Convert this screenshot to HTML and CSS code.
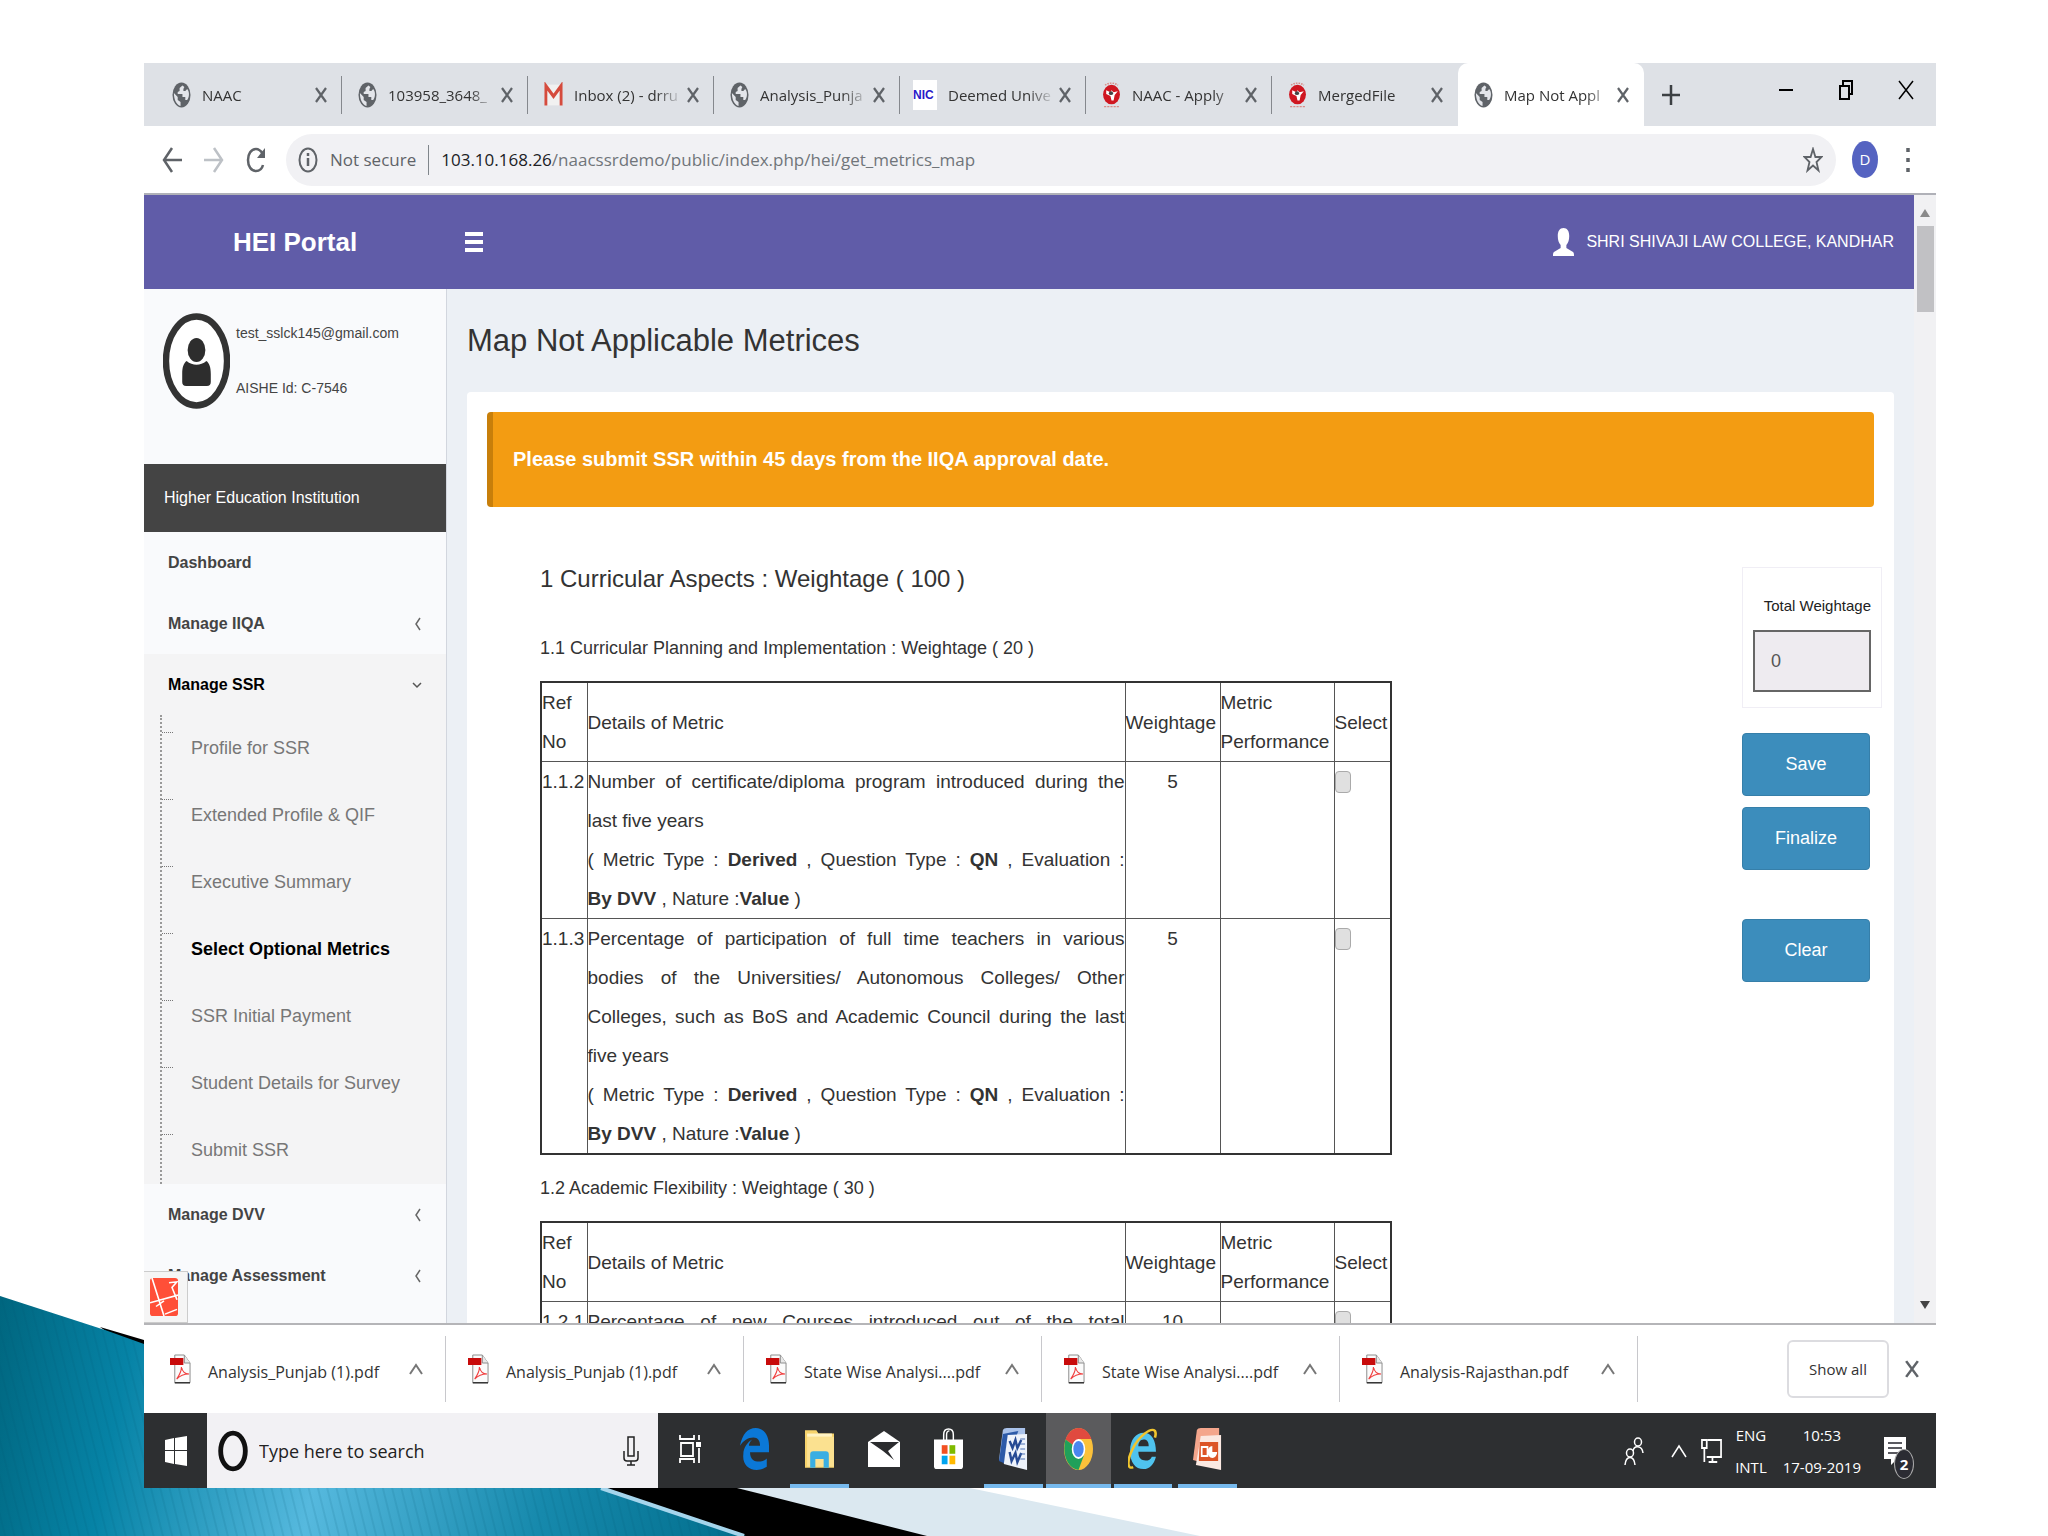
FILE: index.html
```html
<!DOCTYPE html>
<html lang="en">
<head>
  <meta charset="UTF-8" />
  <title>Map Not Applicable Metrices</title>
  <link rel="stylesheet" href="styles.css">
</head>

<body>
  <!-- Shared icons -->
  <svg class="defs" aria-hidden="true">
    <symbol id="globe" viewBox="0 0 20 26" preserveAspectRatio="none">
      <ellipse cx="10" cy="13" rx="9.500" ry="12.500" fill="#5f6368"/>
      <path d="M2 11l4 4v3l3 2v4C5 23 2 18 2 11z" fill="#e3e5ea"/>
      <path d="M11 3.500 8 6v3L6 10v2h5v3h3v3h2c3-4 2-9 0-11l-2 2h-2V7l1-2z" fill="#e3e5ea"/>
    </symbol>
    <symbol id="cross" viewBox="0 0 12 16" preserveAspectRatio="none">
      <path d="M1 1l10 14M11 1 1 15" stroke="#5f6368" stroke-width="2.200" fill="none"/>
    </symbol>
    <symbol id="naac" viewBox="0 0 18 28" preserveAspectRatio="none">
      <path d="M3 3.500C6 .5 12 .5 15 3.500" stroke="#d98a86" stroke-width="1.500" stroke-dasharray="1.500 1" fill="none"/>
      <ellipse cx="9" cy="13.500" rx="8" ry="10.500" fill="#cf1620"/>
      <path d="M4 9l4 2 1-2 2 2 4-1-3 4-1 6h-2l-1-5-4-2z" fill="#fff"/>
      <circle cx="8.500" cy="12" r="2" fill="#444"/>
      <path d="M2 26.500h14" stroke="#d98a86" stroke-width="1.500" stroke-dasharray="2 1"/>
    </symbol>
    <symbol id="pdf" viewBox="0 0 22 30" preserveAspectRatio="none">
      <path d="M5 1h10l6 8v19.500H5z" fill="#fbfbfb" stroke="#8b8b8b"/>
      <path d="M15 1v8h6" fill="#e8e8e8" stroke="#8b8b8b"/>
      <path d="M5 28.800h16" stroke="#333" stroke-width="1.500"/>
      <path d="M0 4h14v7H0z" fill="#c80b0b"/>
      <path d="M7 25c3-4 5-8 5-12 1 5 4 7 8 7-5 0-9 1-13 5z" fill="none" stroke="#f04040" stroke-width="1.200"/>
    </symbol>
    <symbol id="up" viewBox="0 0 14 12" preserveAspectRatio="none">
      <path d="M1 11 7 2l6 9" fill="none" stroke="#777" stroke-width="2"/>
    </symbol>
    <symbol id="left" viewBox="0 0 8 14" preserveAspectRatio="none">
      <path d="M6 1 2 7l4 6" fill="none" stroke="#666" stroke-width="1.500"/>
    </symbol>
  </svg>

  <!-- Slide decoration -->
  <svg class="slide-art" viewBox="0 0 1240 240" aria-hidden="true">
    <defs>
      <linearGradient id="teal" x1="0" y1="0" x2="750" y2="150" gradientUnits="userSpaceOnUse">
        <stop offset="0" stop-color="#00667f"/>
        <stop offset=".18" stop-color="#0683a6"/>
        <stop offset=".45" stop-color="#56b9de"/>
        <stop offset=".75" stop-color="#1689ac"/>
        <stop offset="1" stop-color="#03708f"/>
      </linearGradient>
      <pattern id="lines" width="9" height="30" patternUnits="userSpaceOnUse" patternTransform="rotate(-14)">
        <path d="M1 0v30" stroke="#00536d" stroke-opacity=".22"/>
      </pattern>
    </defs>
    <path d="M730 190h230l240 50H910z" fill="#dbe8f0"/>
    <path d="M100 31l44 13 443 148h150l190 48H740L140 60z" fill="#000"/>
    <path d="M0 0l105 34 39 14 459 144 143 48H0z" fill="url(#teal)"/>
    <path d="M0 0l105 34 39 14 459 144 143 48H0z" fill="url(#lines)"/>
    <path d="M601 192l143 48" stroke="#a5d5ec" stroke-width="4"/>
  </svg>

  <div class="window">
    <!-- Tab strip -->
    <div class="tabs">
      <div class="tab"><svg class="fav"><use href="#globe"/></svg><span>NAAC</span><button aria-label="Close tab"><svg><use href="#cross"/></svg></button></div>
      <div class="tab"><svg class="fav"><use href="#globe"/></svg><span>103958_3648_</span><button aria-label="Close tab"><svg><use href="#cross"/></svg></button></div>
      <div class="tab"><svg class="fav" viewBox="0 0 20 20" preserveAspectRatio="none"><path d="M1 2h18v16H1z" fill="#f1f1f1"/><path d="M2 18V3l8 8 8-8v15" fill="none" stroke="#d54b3d" stroke-width="3"/></svg><span>Inbox (2) - drru</span><button aria-label="Close tab"><svg><use href="#cross"/></svg></button></div>
      <div class="tab"><svg class="fav"><use href="#globe"/></svg><span>Analysis_Punja</span><button aria-label="Close tab"><svg><use href="#cross"/></svg></button></div>
      <div class="tab"><b class="nic">NIC</b><span>Deemed Unive</span><button aria-label="Close tab"><svg><use href="#cross"/></svg></button></div>
      <div class="tab"><svg class="fav"><use href="#naac"/></svg><span>NAAC - Apply</span><button aria-label="Close tab"><svg><use href="#cross"/></svg></button></div>
      <div class="tab last"><svg class="fav"><use href="#naac"/></svg><span>MergedFile</span><button aria-label="Close tab"><svg><use href="#cross"/></svg></button></div>
      <div class="tab active"><svg class="fav"><use href="#globe"/></svg><span>Map Not Appl</span><button aria-label="Close tab"><svg><use href="#cross"/></svg></button></div>
      <button class="new-tab" aria-label="New tab"><svg viewBox="0 0 18 22"><path d="M9 1v20M0 11h18" stroke="#3c4043" stroke-width="2.500"/></svg></button>
      <div class="win-buttons">
        <button aria-label="Minimize"><svg viewBox="0 0 16 20"><path d="M1 10h14" stroke="#000" stroke-width="2"/></svg></button>
        <button aria-label="Restore"><svg viewBox="0 0 16 20"><path d="M2 6h9v13H2zM5 6V1h9v13h-3" fill="none" stroke="#000" stroke-width="2"/></svg></button>
        <button aria-label="Close"><svg viewBox="0 0 16 20"><path d="M1 1l14 18M15 1 1 19" stroke="#000" stroke-width="1.500"/></svg></button>
      </div>
    </div>

    <!-- Address bar -->
    <div class="toolbar">
      <button aria-label="Back"><svg viewBox="0 0 20 26"><path d="M10 1 2 13l8 12M2 13h18" fill="none" stroke="#5f6368" stroke-width="2.500"/></svg></button>
      <button aria-label="Forward"><svg viewBox="0 0 20 26"><path d="M10 1l8 12-8 12M18 13H0" fill="none" stroke="#bdc1c6" stroke-width="2.500"/></svg></button>
      <button aria-label="Reload"><svg viewBox="0 0 20 26"><path d="M17 18c-1 4-4 6-7 6-5 0-8-5-8-11S5 2 10 2c3 0 5 2 7 5" fill="none" stroke="#5f6368" stroke-width="2.500"/><path d="M19 1v10h-8z" fill="#5f6368"/></svg></button>
      <div class="address">
        <svg class="info" viewBox="0 0 20 26" preserveAspectRatio="none"><ellipse cx="10" cy="13" rx="8.500" ry="11.500" fill="none" stroke="#5f6368" stroke-width="2"/><path d="M10 11v8M10 6v3" stroke="#5f6368" stroke-width="2.500"/></svg>
        <span class="secure">Not secure</span>
        <span class="url"><b>103.10.168.26</b>/naacssrdemo/public/index.php/hei/get_metrics_map</span>
        <svg class="star" viewBox="0 0 20 26" preserveAspectRatio="none"><path d="M10 2l2.400 8H18.500l-5 5 2 8.500L10 18.500 4.500 23.500l2-8.500-5-5h6.100z" fill="none" stroke="#5f6368" stroke-width="1.800"/></svg>
      </div>
      <span class="avatar">D</span>
      <button aria-label="Menu"><svg viewBox="0 0 20 26"><path d="M10 1v4M10 11v4M10 21v4" stroke="#5f6368" stroke-width="3.500"/></svg></button>
    </div>

    <!-- Portal page -->
    <div class="viewport">
      <div class="portal">
        <header class="top">
          <a class="brand" href="#">HEI Portal</a>
          <button class="burger" aria-label="Toggle navigation"><i></i><i></i><i></i></button>
          <a class="college" href="#"><svg viewBox="0 0 22 28" preserveAspectRatio="none"><path d="M11 0c4 0 6 3 6 8 0 4-1 7-3 9v3l7 4c1 1 1 2 1 4H0c0-2 0-3 1-4l7-4v-3C6 15 5 12 5 8c0-5 2-8 6-8z" fill="#fff"/></svg>SHRI SHIVAJI LAW COLLEGE, KANDHAR</a>
        </header>

        <div class="columns">
          <aside class="sidebar">
            <div class="user">
              <svg viewBox="0 0 68 96" preserveAspectRatio="none">
                <ellipse cx="34" cy="48" rx="31" ry="44.500" fill="#fff" stroke="#333" stroke-width="6.500"/>
                <ellipse cx="34" cy="37" rx="9" ry="12" fill="#2d2d2d"/>
                <path d="M24 48c6 5 14 5 20 0 3 2 4.500 6 4.500 13v8q0 4-4 4h-21q-4 0-4-4v-8c0-7 1.500-11 4.500-13z" fill="#2d2d2d"/>
              </svg>
              <div>
                <p>test_sslck145@gmail.com</p>
                <p>AISHE Id: C-7546</p>
              </div>
            </div>
            <h2 class="side-head">Higher Education Institution</h2>
            <nav>
              <a class="item" href="#">Dashboard</a>
              <a class="item" href="#">Manage IIQA<svg><use href="#left"/></svg></a>
              <div class="open">
                <a class="item" href="#">Manage SSR<svg class="down" viewBox="0 0 10 10"><path d="M1 3l4 4 4-4" fill="none" stroke="#555" stroke-width="1.500"/></svg></a>
                <ul>
                  <li><a href="#">Profile for SSR</a></li>
                  <li><a href="#">Extended Profile &amp; QIF</a></li>
                  <li><a href="#">Executive Summary</a></li>
                  <li><a class="current" href="#">Select Optional Metrics</a></li>
                  <li><a href="#">SSR Initial Payment</a></li>
                  <li><a href="#">Student Details for Survey</a></li>
                  <li><a href="#">Submit SSR</a></li>
                </ul>
              </div>
              <a class="item" href="#">Manage DVV<svg><use href="#left"/></svg></a>
              <a class="item" href="#">Manage Assessment<svg><use href="#left"/></svg></a>
            </nav>
          </aside>

          <main>
            <h1>Map Not Applicable Metrices</h1>
            <div class="card">
              <div class="alert">Please submit SSR within 45 days from the IIQA approval date.</div>
              <div class="work">
                <section class="metrics">
                  <h3>1 Curricular Aspects : Weightage ( 100 )</h3>
                  <h4>1.1 Curricular Planning and Implementation : Weightage ( 20 )</h4>
                  <table>
                    <tr><th class="ref">Ref No</th><th>Details of Metric</th><th class="weight">Weightage</th><th class="perf">Metric Performance</th><th class="pick">Select</th></tr>
                    <tr>
                      <td>1.1.2</td>
                      <td class="detail">Number of certificate/diploma program introduced during the last five years<br>( Metric Type : <b>Derived</b> , Question Type : <b>QN</b> , Evaluation : <b>By DVV</b> , Nature :<b>Value</b> )</td>
                      <td class="num">5</td><td></td>
                      <td><input type="checkbox" aria-label="Select 1.1.2"></td>
                    </tr>
                    <tr>
                      <td>1.1.3</td>
                      <td class="detail">Percentage of participation of full time teachers in various bodies of the Universities/ Autonomous Colleges/ Other Colleges, such as BoS and Academic Council during the last five years<br>( Metric Type : <b>Derived</b> , Question Type : <b>QN</b> , Evaluation : <b>By DVV</b> , Nature :<b>Value</b> )</td>
                      <td class="num">5</td><td></td>
                      <td><input type="checkbox" aria-label="Select 1.1.3"></td>
                    </tr>
                  </table>
                  <h4>1.2 Academic Flexibility : Weightage ( 30 )</h4>
                  <table>
                    <tr><th class="ref">Ref No</th><th>Details of Metric</th><th class="weight">Weightage</th><th class="perf">Metric Performance</th><th class="pick">Select</th></tr>
                    <tr>
                      <td>1.2.1</td>
                      <td class="detail">Percentage of new Courses introduced out of the total <span class="keep">number of courses</span></td>
                      <td class="num">10</td><td></td>
                      <td><input type="checkbox" aria-label="Select 1.2.1"></td>
                    </tr>
                  </table>
                </section>
                <form class="actions">
                  <div class="total">
                    <label for="total">Total Weightage</label>
                    <input type="text" id="total" value="0" readonly>
                  </div>
                  <button type="button">Save</button>
                  <button type="button">Finalize</button>
                  <button type="button" class="clear">Clear</button>
                </form>
              </div>
            </div>
          </main>
        </div>
      </div>
      <div class="scrollbar">
        <svg viewBox="0 0 10 8"><path d="M0 8 5 0l5 8z" fill="#8a8a8a"/></svg>
        <div class="thumb"></div>
        <svg viewBox="0 0 10 8"><path d="M0 0h10L5 8z" fill="#444"/></svg>
      </div>
      <button class="debug" aria-label="Debug bar"><svg viewBox="0 0 28 40" preserveAspectRatio="none"><rect width="28" height="40" rx="3" fill="#ff4f38"/><path d="M2 0l12 40M0 26l28-8M19 5l8-1-5 6 5 13M6 30l8-6M15 38l12-5" fill="none" stroke="#fff" stroke-width="1.600"/></svg></button>
    </div>

    <!-- Downloads -->
    <div class="downloads">
      <div class="file"><svg class="pdf"><use href="#pdf"/></svg><a href="#">Analysis_Punjab (1).pdf</a><button aria-label="Options"><svg><use href="#up"/></svg></button></div>
      <div class="file"><svg class="pdf"><use href="#pdf"/></svg><a href="#">Analysis_Punjab (1).pdf</a><button aria-label="Options"><svg><use href="#up"/></svg></button></div>
      <div class="file"><svg class="pdf"><use href="#pdf"/></svg><a href="#">State Wise Analysi....pdf</a><button aria-label="Options"><svg><use href="#up"/></svg></button></div>
      <div class="file"><svg class="pdf"><use href="#pdf"/></svg><a href="#">State Wise Analysi....pdf</a><button aria-label="Options"><svg><use href="#up"/></svg></button></div>
      <div class="file"><svg class="pdf"><use href="#pdf"/></svg><a href="#">Analysis-Rajasthan.pdf</a><button aria-label="Options"><svg><use href="#up"/></svg></button></div>
      <button class="show-all">Show all</button>
      <button class="close-bar" aria-label="Close downloads"><svg><use href="#cross"/></svg></button>
    </div>

    <!-- Windows taskbar -->
    <div class="taskbar">
      <button class="start" aria-label="Start"><svg viewBox="0 0 22 30" preserveAspectRatio="none"><path d="M0 4l9-2v12H0zM10 2l12-2v14H10zM0 15h9v13l-9-2zM10 15h12v15l-12-2z" fill="#fff"/></svg></button>
      <label class="search">
        <svg class="ring" viewBox="0 0 28 40" preserveAspectRatio="none"><ellipse cx="14" cy="20" rx="11.500" ry="17" fill="none" stroke="#111" stroke-width="4.500"/></svg>
        <input type="text" placeholder="Type here to search">
        <svg class="mic" viewBox="0 0 16 30" preserveAspectRatio="none"><path d="M5 1h6v19H5zM1 15v7q0 3 3 3h8q3 0 3-3v-7M8 25v4M4 29h8" fill="none" stroke="#222" stroke-width="1.500"/></svg>
      </label>
      <div class="apps">
        <button class="app" aria-label="Task view"><svg class="small" viewBox="0 0 22 30" preserveAspectRatio="none"><path d="M1 1v4h14V1M2 9h12v13H2zM1 29v-4h14v4M20 1v5M20 14v15" fill="none" stroke="#fff" stroke-width="1.800"/><path d="M17 8h5v5h-5z" fill="#fff"/></svg></button>
        <button class="app" aria-label="Edge"><svg viewBox="0 0 26 40" preserveAspectRatio="none"><path d="M0 17C2 6 7 0 14 0c8 0 12 8 12 17v6H9c0 7 4 9 8 9 3 0 5-1 7-3v8c-3 2-6 3-9 3C7 40 2 34 3 25c0-6 4-12 8-14-2 2-3 4-3 6h10c0-5-2-8-6-8C7 9 3 12 0 17z" fill="#0b78d7"/></svg></button>
        <button class="app run" aria-label="File Explorer"><svg viewBox="0 0 28 38" preserveAspectRatio="none"><path d="M0 2h11l2 3h15v31H0z" fill="#f6d36c"/><path d="M2 5h24v3H2z" fill="#fff3c4"/><path d="M2 8h26v27H2z" fill="#fbe190"/><path d="M5 36V24q0-3 3-3h12q3 0 3 3v12h-5v-8h-8v8z" fill="#39aee2"/></svg></button>
        <button class="app" aria-label="Mail"><svg class="wide" viewBox="0 0 32 36" preserveAspectRatio="none"><path d="M0 11 16 0l16 11v25H0z" fill="#fff"/><path d="M2 11h29L20 20l6 9-11-9z" fill="#2b2c2e"/></svg></button>
        <button class="app" aria-label="Store"><svg viewBox="0 0 30 44" preserveAspectRatio="none"><path d="M10 13V7q0-6 5-6t5 6v6M13 13V7q0-4 3-4" fill="none" stroke="#fff" stroke-width="1.500"/><path d="M0 12h30v28q0 3-3 3H3q-3 0-3-3z" fill="#fff"/><path d="M8 18h6v9H8z" fill="#f25022"/><path d="M16 18h6v9h-6z" fill="#7fba00"/><path d="M8 29h6v9H8z" fill="#00a4ef"/><path d="M16 29h6v9h-6z" fill="#ffb900"/></svg></button>
        <button class="app run" aria-label="Word"><svg viewBox="0 0 30 42" preserveAspectRatio="none"><path d="M4 2q1-2 4-2h19v8L15 36 0 32z" fill="#a9c2ea"/><path d="M4 6 20 3 7 36 0 33z" fill="#2c5aa8"/><path d="M9 7l20-1v36L5 36z" fill="#eef3fb"/><path d="M11 13l3 7 3-8 2 8 4-8M11 24l2 9 4-8 2 9 4-9" fill="none" stroke="#274b94" stroke-width="2.500"/><path d="M22 11h5M22 16h5M22 21h5M22 26h5M22 31h5" stroke="#4a6fb5"/></svg></button>
        <button class="app on" aria-label="Chrome"><svg viewBox="0 0 28 42" preserveAspectRatio="none"><ellipse cx="14" cy="21" rx="14" ry="21" fill="#fbc13a"/><path d="M14 21 1.500 11.500C4 4 9 0 14 0c6 0 10 4 12.500 11H14z" fill="#e04a3f"/><path d="M1.500 11.500C-2 24 2 40 14 42l5-14-5-7z" fill="#20a05a"/><ellipse cx="14" cy="21" rx="6.500" ry="10" fill="#fff"/><ellipse cx="14" cy="21" rx="5" ry="8" fill="#4a86ee"/></svg></button>
        <button class="app run" aria-label="Internet Explorer"><svg viewBox="0 0 28 44" preserveAspectRatio="none"><path d="M2 24C2 12 8 5 15 5c8 0 12 8 12 20H10c0 7 3 9 7 9 3 0 5-1 6-4h4c-2 8-6 13-12 13C7 43 2 36 2 24zm8-5h10c0-5-2-7-5-7s-5 3-5 7z" fill="#4fc3ee"/><path d="M5 41C-1 44-1 34 4 23 10 9 22-1 26 3c1 2 1 4 0 7" fill="none" stroke="#f0c52e" stroke-width="2.500"/></svg></button>
        <button class="app run" aria-label="PowerPoint"><svg viewBox="0 0 30 42" preserveAspectRatio="none"><path d="M4 2q1-2 4-2h19v8L15 36 0 32z" fill="#f4a68c"/><path d="M8 8l21-1v35L3 37z" fill="#fbe9e2"/><path d="M7 14h19v19H6z" fill="#dc5426"/><path d="M9 19h6v9H9z" fill="none" stroke="#fff" stroke-width="1.800"/><path d="M20 18v6h5a5 6 0 1 1-5-6z" fill="#fff"/></svg></button>
      </div>
      <div class="tray">
        <svg class="people" viewBox="0 0 20 28" preserveAspectRatio="none"><ellipse cx="14" cy="5" rx="3.500" ry="4" fill="none" stroke="#fff" stroke-width="1.500"/><path d="M9 14c1-6 9-6 10 2" fill="none" stroke="#fff" stroke-width="1.500"/><ellipse cx="6" cy="16" rx="3.500" ry="4" fill="none" stroke="#fff" stroke-width="1.500"/><path d="M1 28c1-10 9-10 10 0" fill="none" stroke="#fff" stroke-width="1.500"/></svg>
        <svg class="chev" viewBox="0 0 16 14" preserveAspectRatio="none"><path d="M1 13 8 2l7 11" fill="none" stroke="#fff" stroke-width="1.500"/></svg>
        <svg class="net" viewBox="0 0 22 26" preserveAspectRatio="none"><path d="M7 2h14v17H6M1 2h5v8H1zM3.500 10v14M8 24h9M12 19v5" fill="none" stroke="#fff" stroke-width="1.800"/></svg>
        <div class="two"><span>ENG</span><span>INTL</span></div>
        <div class="two clock"><span>10:53</span><span>17-09-2019</span></div>
        <div class="notes">
          <svg viewBox="0 0 22 28" preserveAspectRatio="none"><path d="M0 0h22v22h-9l-6 6v-6H0z" fill="#fff"/><path d="M4 6h14M4 11h14M4 16h10" stroke="#24252c" stroke-width="1.500"/></svg>
          <b>2</b>
        </div>
      </div>
    </div>
  </div>
</body>
</html>
```

FILE: styles.css
```css
* {
  box-sizing: border-box;
}

body {
  margin: 0;
  height: 100vh;
  padding: 63px 112px 48px 144px;
  background: #fff;
  font-family: "Liberation Sans", Arial, sans-serif;
  font-size: 18px;
  color: #333;
}

a {
  color: inherit;
  text-decoration: none;
}

button {
  border: none;
  padding: 0;
  background: none;
  font: inherit;
  color: inherit;
  cursor: pointer;
}

svg {
  display: block;
  flex: none;
}

.defs {
  width: 0;
  height: 0;
  position: absolute;
}

.slide-art {
  position: absolute;
  left: 0;
  bottom: 0;
  width: 1240px;
  height: 240px;
}

.window {
  position: relative;
  display: flex;
  flex-direction: column;
  height: 100%;
  background: #fff;
  overflow: hidden;
}

.tabs,
.toolbar,
.downloads,
.taskbar {
  font-family: "Open Sans", "Noto Sans", sans-serif;
}

/* Tab strip */
.tabs {
  display: flex;
  height: 63px;
  padding-left: 12px;
  background: #dee1e6;
  font-size: 15px;
}

.tab {
  display: flex;
  align-items: center;
  flex: 0 1 186px;
  min-width: 0;
  padding: 0 15px 0 16px;
  position: relative;
}

.tab::after {
  content: "";
  position: absolute;
  right: 0;
  top: 13px;
  height: 38px;
  border-right: 1px solid #85888d;
}

.tab.last::after,
.tab.active::after {
  display: none;
}

.tab span {
  flex: 1;
  min-width: 0;
  margin: 0 4px 0 11px;
  overflow: hidden;
  white-space: nowrap;
  mask-image: linear-gradient(to right, #000 75%, transparent);
}

.tab button svg {
  width: 12px;
  height: 16px;
}

.tab.active {
  background: #fff;
  border-radius: 10px 10px 0 0;
}

.fav {
  width: 19px;
  height: 26px;
}

.nic {
  width: 24px;
  margin-left: -3px;
  background: #fff;
  color: #2a18c8;
  font: bold 12px/30px "Liberation Sans", Arial, sans-serif;
}

.new-tab {
  margin-left: 18px;
}

.new-tab svg {
  width: 18px;
  height: 22px;
}

.win-buttons {
  display: flex;
  margin-left: auto;
  padding-bottom: 10px;
}

.win-buttons button {
  width: 60px;
  display: grid;
  place-items: center;
}

.win-buttons svg {
  width: 16px;
  height: 20px;
}

/* Address bar */
.toolbar {
  display: flex;
  align-items: center;
  height: 69px;
  padding: 0 18px;
  border-bottom: 2px solid #b0b1b8;
  font-size: 17px;
}

.toolbar button svg {
  width: 20px;
  height: 26px;
}

.toolbar button + button {
  margin-left: 22px;
}

.address {
  flex: 1;
  display: flex;
  align-items: center;
  height: 52px;
  margin: 0 16px 0 20px;
  padding: 0 13px 0 12px;
  border-radius: 26px;
  background: #f1f1f4;
  color: #70757a;
  white-space: nowrap;
}

.info,
.star {
  width: 20px;
  height: 26px;
}

.secure {
  margin: 0 12px;
  padding-right: 12px;
  border-right: 1px solid #80868b;
  color: #5f6368;
  line-height: 30px;
}

.url {
  flex: 1;
}

.url b {
  font-weight: normal;
  color: #202124;
}

.avatar {
  width: 26px;
  margin-right: 20px;
  border-radius: 50%;
  background: #5563c1;
  color: #fff;
  font-size: 15px;
  line-height: 37px;
  text-align: center;
}

/* Portal */
.viewport {
  position: relative;
  display: flex;
  flex: 1;
  min-height: 0;
  overflow: hidden;
}

.portal {
  flex: 1;
  min-width: 0;
}

.top {
  display: flex;
  align-items: center;
  height: 94px;
  background: #605ca8;
  color: #fff;
}

.brand {
  width: 302px;
  font-size: 26px;
  font-weight: bold;
  text-align: center;
}

.burger {
  display: grid;
  gap: 4px;
  width: 18px;
  margin-left: 19px;
}

.burger i {
  height: 4px;
  background: #fff;
}

.college {
  display: flex;
  align-items: center;
  gap: 12px;
  margin-left: auto;
  padding-right: 20px;
  font-size: 16px;
}

.college svg {
  width: 21px;
  height: 28px;
}

.columns {
  display: flex;
  min-height: 1100px;
}

.sidebar {
  width: 303px;
  flex: none;
  border-right: 1px solid #d2d6de;
  background: #f9fafc;
  color: #444;
}

.user {
  display: flex;
  gap: 6px;
  height: 175px;
  padding: 24px 19px;
  font-size: 14px;
}

.user svg {
  width: 67px;
  height: 96px;
}

.user p {
  margin: 8px 0 31px;
  line-height: 24px;
}

.side-head {
  margin: 0;
  padding-left: 20px;
  background: #444;
  color: #fff;
  font-size: 16px;
  font-weight: normal;
  line-height: 68px;
}

.item {
  display: flex;
  align-items: center;
  justify-content: space-between;
  padding: 0 24px;
  font-size: 16px;
  font-weight: bold;
  line-height: 61px;
}

.item svg {
  width: 8px;
  height: 14px;
}

.item .down {
  width: 10px;
}

.open {
  background: #f4f4f5;
}

.open .item {
  color: #000;
}

.open ul {
  margin: 0 0 0 16px;
  padding: 0;
  border-left: 2px dotted #999;
  list-style: none;
}

.open li {
  display: flex;
  gap: 18px;
  color: #777;
  line-height: 67px;
  white-space: nowrap;
}

.open li::before {
  content: "";
  width: 11px;
  margin-top: 17px;
  border-top: 1px dotted #777;
}

.open .current {
  color: #000;
  font-weight: bold;
}

main {
  flex: 1;
  min-width: 0;
  padding: 0 20px;
  background: #ecf0f5;
}

h1 {
  margin: 0;
  font-size: 31px;
  font-weight: normal;
  line-height: 103px;
}

.card {
  min-height: 1000px;
  padding: 20px;
  border-radius: 4px;
  background: #fff;
}

.alert {
  padding-left: 20px;
  border-left: 6px solid #c87f0a;
  border-radius: 4px;
  background: #f39c12;
  color: #fff;
  font-size: 20px;
  font-weight: bold;
  line-height: 95px;
}

.work {
  display: flex;
  justify-content: space-between;
  padding: 43px 0 0 53px;
}

.metrics {
  flex: 0 1 852px;
}

h3,
h4 {
  margin: 0;
  font-weight: normal;
}

h3 {
  font-size: 24px;
  line-height: 58px;
}

h4 {
  font-size: 18px;
  line-height: 66px;
}

h3 + h4 {
  padding-top: 7px;
}

table {
  width: 100%;
  border: 2px solid #333;
  border-collapse: collapse;
  table-layout: fixed;
  font-size: 19px;
  line-height: 39px;
}

th,
td {
  padding: 0;
  border: 1px solid #555;
  font-weight: normal;
  text-align: left;
  vertical-align: top;
}

th {
  vertical-align: middle;
}

.ref {
  width: 46px;
}

.weight {
  width: 95px;
}

.perf {
  width: 114px;
}

.pick {
  width: 57px;
}

.detail {
  text-align: justify;
}

.detail b,
.keep {
  white-space: nowrap;
}

.num {
  text-align: center;
}

td input {
  display: block;
  appearance: none;
  width: 16px;
  height: 22px;
  margin: 9px 0 0;
  border: 1px solid #aaa;
  border-radius: 4px;
  background: #e0e0e0;
}

/* Weightage box and buttons */
.actions {
  display: flex;
  flex-direction: column;
  gap: 11px;
  width: 140px;
  padding-top: 17px;
  margin-right: -8px;
}

.total {
  height: 141px;
  margin-bottom: 14px;
  padding: 20px 10px 0;
  border: 1px solid #f0eef5;
}

.total label {
  display: block;
  color: #222;
  font-size: 15px;
  line-height: 36px;
  text-align: right;
  white-space: nowrap;
}

.total input {
  width: 100%;
  height: 62px;
  margin-top: 6px;
  padding: 0 16px;
  border: 2px solid #666;
  background: #eeebf0;
  color: #555;
  font: inherit;
}

.actions button {
  width: 128px;
  border: 1px solid #367fa9;
  border-radius: 4px;
  background: #3c8dbc;
  color: #fff;
  line-height: 61px;
}

.actions .clear {
  margin-top: 38px;
}

.scrollbar {
  display: flex;
  flex-direction: column;
  align-items: center;
  width: 22px;
  padding: 14px 0;
  background: #f1f1f3;
}

.scrollbar svg {
  width: 10px;
  height: 8px;
}

.thumb {
  width: 17px;
  height: 86px;
  margin: 9px 0 auto;
  background: #c1c1c4;
}

.debug {
  position: absolute;
  left: 0;
  bottom: 0;
  padding: 6px 9px 6px 6px;
  border: 1px solid #ccc;
  border-left: none;
  background: #f5f5f5;
}

.debug svg {
  width: 28px;
  height: 38px;
}

/* Downloads */
.downloads {
  display: flex;
  align-items: center;
  height: 90px;
  padding-left: 4px;
  border-top: 2px solid #b5b5b8;
  font-size: 16px;
}

.file {
  display: flex;
  align-items: center;
  flex: 0 1 298px;
  height: 66px;
  padding: 0 22px;
  border-right: 1px solid #c8c8cc;
  white-space: nowrap;
}

.file a {
  flex: 1;
  padding: 6px 0 0 17px;
}

.pdf {
  width: 21px;
  height: 30px;
}

.file button svg {
  width: 14px;
  height: 12px;
}

.show-all {
  width: 102px;
  height: 58px;
  margin: 0 16px 0 auto;
  border: 2px solid #dcdce0;
  border-radius: 6px;
  font-size: 15px;
}

.close-bar {
  margin-right: 17px;
}

.close-bar svg {
  width: 14px;
  height: 18px;
}

/* Taskbar */
.taskbar {
  display: flex;
  height: 75px;
  background: #2d2f31;
  color: #fff;
  font-size: 18px;
}

.taskbar button {
  display: grid;
  place-items: center;
}

.start {
  width: 63px;
}

.start svg {
  width: 22px;
  height: 30px;
}

.search {
  display: flex;
  align-items: center;
  flex: 0 1 451px;
  padding: 0 19px 0 11px;
  background: #f2f1f4;
}

.search input {
  flex: 1;
  min-width: 0;
  padding: 0 11px;
  border: none;
  background: none;
  font: inherit;
}

.search input::placeholder {
  color: #222;
  opacity: 1;
}

.ring {
  width: 30px;
  height: 42px;
}

.mic {
  width: 16px;
  height: 30px;
}

.apps {
  display: grid;
  grid-template-columns: repeat(9, 1fr);
  width: 582px;
}

.app {
  border-bottom: 4px solid transparent;
}

.app svg {
  width: 29px;
  height: 42px;
}

.app .small {
  width: 22px;
  height: 30px;
}

.app .wide {
  width: 32px;
  height: 36px;
}

.app.run {
  border-image: linear-gradient(to right, transparent 10%, #76b9ed 10% 90%, transparent 90%) 4;
  border-width: 0 0 4px;
  border-style: solid;
}

.app.on {
  border-bottom-color: #76b9ed;
  background: #5b5b5d;
}

.tray {
  display: flex;
  align-items: center;
  margin-left: auto;
  padding-right: 30px;
  font-size: 15px;
}

.people {
  width: 20px;
  height: 28px;
}

.chev {
  width: 16px;
  height: 14px;
  margin: 0 14px 0 27px;
}

.net {
  width: 21px;
  height: 26px;
}

.two {
  display: grid;
  margin-left: 13px;
  line-height: 32px;
  text-align: center;
}

.clock {
  margin: 0 23px 0 16px;
}

.notes {
  position: relative;
}

.notes svg {
  width: 22px;
  height: 28px;
}

.notes b {
  position: absolute;
  left: 10px;
  top: 12px;
  width: 20px;
  border: 1px solid #aaa;
  border-radius: 50%;
  background: #2b2c33;
  line-height: 28px;
  text-align: center;
}
```
